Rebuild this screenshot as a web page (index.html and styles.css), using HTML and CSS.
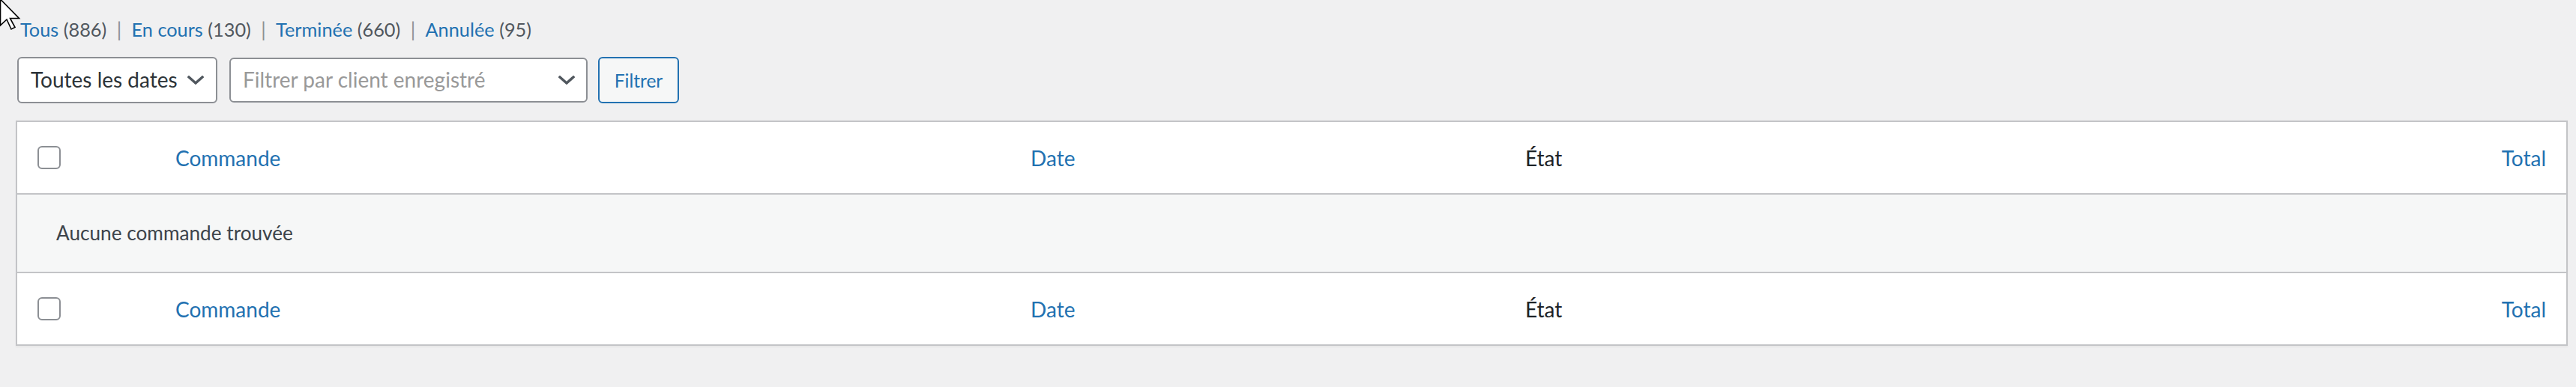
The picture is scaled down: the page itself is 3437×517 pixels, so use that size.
FILE: index.html
```html
<!DOCTYPE html>
<html lang="fr">
<head>
<meta charset="utf-8">
<title>Commandes</title>
<link rel="stylesheet" href="styles.css">
</head>
<body>
<svg class="cursor" width="30" height="42" viewBox="0 0 30 42" aria-hidden="true">
  <polygon points="0.5,-1 0.5,34 9,26 15,39 20,36.5 13.5,24.5 25.5,24.5" fill="#ffffff" stroke="#000000" stroke-width="1.6" stroke-linejoin="miter"/>
</svg>

<ul class="subsubsub">
  <li><a href="#" class="link">Tous <span class="count">(886)</span></a><span class="sep">|</span></li>
  <li><a href="#" class="link">En cours <span class="count">(130)</span></a><span class="sep">|</span></li>
  <li><a href="#" class="link">Terminée <span class="count">(660)</span></a><span class="sep">|</span></li>
  <li><a href="#" class="link">Annulée <span class="count">(95)</span></a></li>
</ul>

<div class="tablenav">
  <div class="select select-dates">
    <span class="select-text">Toutes les dates</span>
    <svg class="chev" width="22" height="12" viewBox="0 0 22 12" aria-hidden="true"><path d="M2 2 L11 10 L20 2" fill="none" stroke="#50575e" stroke-width="3.4" stroke-linecap="square"/></svg>
  </div>
  <div class="select select-client">
    <span class="select-placeholder">Filtrer par client enregistré</span>
    <svg class="chev" width="22" height="12" viewBox="0 0 22 12" aria-hidden="true"><path d="M2 2 L11 10 L20 2" fill="none" stroke="#50575e" stroke-width="3.4" stroke-linecap="square"/></svg>
  </div>
  <button class="btn" type="button">Filtrer</button>
</div>

<div class="list-table">
  <div class="row row-head">
    <div class="cell cell-check"><span class="checkbox"></span></div>
    <div class="cell"><a href="#" class="col-link">Commande</a></div>
    <div class="cell"><a href="#" class="col-link">Date</a></div>
    <div class="cell cell-state">État</div>
    <div class="cell cell-total"><a href="#" class="col-link">Total</a></div>
  </div>
  <div class="row-empty">Aucune commande trouvée</div>
  <div class="row row-foot">
    <div class="cell cell-check"><span class="checkbox"></span></div>
    <div class="cell"><a href="#" class="col-link">Commande</a></div>
    <div class="cell"><a href="#" class="col-link">Date</a></div>
    <div class="cell cell-state">État</div>
    <div class="cell cell-total"><a href="#" class="col-link">Total</a></div>
  </div>
</div>
</body>
</html>
```

FILE: styles.css
```css
* {
  box-sizing: border-box;
}

html,
body {
  margin: 0;
  padding: 0;
}

body {
  background: #f0f0f1;
  font-family: "Lato", "Open Sans", "Liberation Sans", sans-serif;
  color: #3c434a;
  width: 3437px;
  height: 517px;
  overflow: hidden;
  position: relative;
}

.cursor {
  position: absolute;
  top: 0;
  left: 0;
  z-index: 10;
}

a {
  text-decoration: none;
  color: #2271b1;
}

/* status links */
.subsubsub {
  list-style: none;
  margin: 23px 0 0 0;
  padding: 0 0 0 27px;
  display: flex;
  align-items: center;
  height: 32px;
  font-size: 25.3px;
  line-height: 32px;
  color: #646970;
}

.subsubsub li {
  display: flex;
  align-items: center;
}

.count {
  color: #50575e;
}

.sep {
  color: #8c8f94;
  margin: 0 13.4px;
  font-size: 26px;
}

/* filters */
.tablenav {
  display: flex;
  align-items: flex-start;
  margin: 21px 0 0 23px;
  height: 62px;
}

.select {
  display: flex;
  align-items: center;
  justify-content: space-between;
  background: #fff;
  border: 2px solid #8c8f94;
  border-radius: 6px;
  font-size: 28px;
  line-height: 1.2;
}

.select-dates {
  width: 267px;
  height: 62px;
  padding: 0 16px 0 16px;
}

.select-client {
  width: 478px;
  height: 60px;
  margin: 1px 0 0 16px;
  padding: 0 15px 0 16px;
}

.select-text {
  color: #2c3338;
}

.select-placeholder {
  color: #999;
}

.chev {
  display: block;
  flex: none;
}

.btn {
  margin-left: 14px;
  width: 108px;
  height: 62px;
  border: 2px solid #2271b1;
  border-radius: 6px;
  background: #f6f7f7;
  color: #2271b1;
  font-family: inherit;
  font-size: 24.5px;
  padding: 1px 0 0 0;
  line-height: 1.2;
}

/* table */
.list-table {
  margin: 23px 0 0 21px;
  width: 3405px;
  border: 2px solid #c3c4c7;
  background: #fff;
  box-shadow: 0 2px 2px rgba(0, 0, 0, 0.04);
}

.row {
  display: grid;
  grid-template-columns: 191px 1141px 660px 1fr 400px;
  align-items: center;
  font-size: 28px;
  line-height: 1.2;
}

.row-head {
  height: 97px;
  border-bottom: 2px solid #c3c4c7;
}

.row-foot {
  height: 97px;
  border-top: 2px solid #c3c4c7;
}

.cell {
  padding: 3px 20px 0 20px;
}

.cell-check {
  padding: 0 0 0 27px;
  display: flex;
  align-items: center;
}

.checkbox {
  display: block;
  width: 31px;
  height: 31px;
  border: 2px solid #8c8f94;
  border-radius: 6px;
  background: #fff;
}

.cell-state {
  color: #1d2327;
}

.row .cell-total {
  text-align: right;
  padding-right: 27px;
}

.row-empty {
  height: 103px;
  background: #f6f7f7;
  display: flex;
  align-items: center;
  padding-left: 52px;
  padding-top: 1px;
  font-size: 26.2px;
  line-height: 1.2;
  color: #3c434a;
}
```
